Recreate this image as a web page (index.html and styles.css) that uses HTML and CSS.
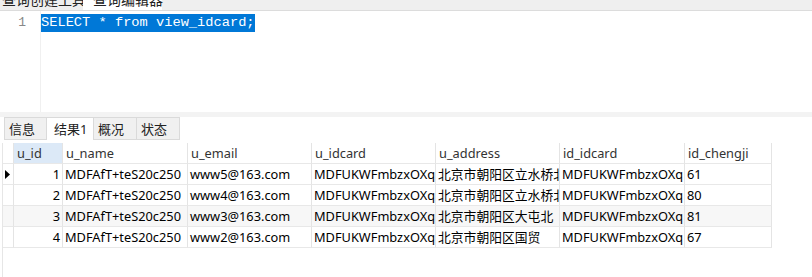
FILE: index.html
```html
<!DOCTYPE html>
<html lang="zh">

<head>
    <meta charset="utf-8">
    <title>查询编辑器</title>
    <link rel="stylesheet" href="styles.css">
</head>

<body>
    <nav class="top-tabs">
        <span class="top-tab">查询创建工具</span>
        <span class="top-tab aktiv">查询编辑器</span>
    </nav>

    <section class="editor">
        <div class="gutter">1</div>
        <pre class="code"><span class="markeret">SELECT * from view_idcard;</span></pre>
    </section>

    <div class="splitter"></div>

    <nav class="result-tabs">
        <span class="result-tab">信息</span>
        <span class="result-tab aktiv">结果1</span>
        <span class="result-tab">概况</span>
        <span class="result-tab">状态</span>
    </nav>

    <section class="grid">
        <div class="row header">
            <span class="cell"></span>
            <span class="cell valgt">u_id</span>
            <span class="cell">u_name</span>
            <span class="cell">u_email</span>
            <span class="cell">u_idcard</span>
            <span class="cell">u_address</span>
            <span class="cell">id_idcard</span>
            <span class="cell">id_chengji</span>
        </div>
        <div class="row">
            <span class="cell indikator"><svg width="5" height="9" viewBox="0 0 5 9"><polygon points="0,0 5,4.5 0,9" fill="#000"/></svg></span>
            <span class="cell tal">1</span>
            <span class="cell">MDFAfT+teS20c250</span>
            <span class="cell">www5@163.com</span>
            <span class="cell">MDFUKWFmbzxOXq</span>
            <span class="cell">北京市朝阳区立水桥北</span>
            <span class="cell">MDFUKWFmbzxOXq</span>
            <span class="cell">61</span>
        </div>
        <div class="row">
            <span class="cell indikator"></span>
            <span class="cell tal">2</span>
            <span class="cell">MDFAfT+teS20c250</span>
            <span class="cell">www4@163.com</span>
            <span class="cell">MDFUKWFmbzxOXq</span>
            <span class="cell">北京市朝阳区立水桥北</span>
            <span class="cell">MDFUKWFmbzxOXq</span>
            <span class="cell">80</span>
        </div>
        <div class="row">
            <span class="cell indikator"></span>
            <span class="cell tal">3</span>
            <span class="cell">MDFAfT+teS20c250</span>
            <span class="cell">www3@163.com</span>
            <span class="cell">MDFUKWFmbzxOXq</span>
            <span class="cell">北京市朝阳区大屯北</span>
            <span class="cell">MDFUKWFmbzxOXq</span>
            <span class="cell">81</span>
        </div>
        <div class="row">
            <span class="cell indikator"></span>
            <span class="cell tal">4</span>
            <span class="cell">MDFAfT+teS20c250</span>
            <span class="cell">www2@163.com</span>
            <span class="cell">MDFUKWFmbzxOXq</span>
            <span class="cell">北京市朝阳区国贸</span>
            <span class="cell">MDFUKWFmbzxOXq</span>
            <span class="cell">67</span>
        </div>
    </section>
</body>

</html>
```

FILE: styles.css
```css
body {
    margin: 0;
    height: 277px;
    display: flex;
    flex-direction: column;
    background-color: #fff;
    font-family: "Noto Sans", "Noto Sans CJK SC", sans-serif;
    font-size: 13px;
    color: #000;
    overflow: hidden;
}

/* faner helt oppe - skåret af i toppen */
.top-tabs {
    display: flex;
    height: 10px;
    overflow: hidden;
    background-color: #efefef;
    border-bottom: 1px solid #dcdcdc;
}

.top-tab {
    margin-top: -8px;
    line-height: 16px;
    padding: 0 2px;
    width: 79px;
    font-size: 14px;
    color: #222;
    white-space: nowrap;
}

.top-tab.aktiv {
    background-color: #fff;
    padding-left: 10px;
    width: 67px;
}

/* sql editor */
.editor {
    display: flex;
    height: 101px;
}

.gutter {
    width: 26px;
    padding-right: 14px;
    padding-top: 3px;
    line-height: 18px;
    text-align: right;
    color: #888;
    font-family: "Liberation Mono", monospace;
    font-size: 13px;
    border-right: 1px solid #f0f0f0;
}

.code {
    margin: 0;
    padding-top: 3px;
    font-family: "Liberation Mono", monospace;
    font-size: 13.7px;
    line-height: 18px;
}

.markeret {
    display: inline-block;
    background-color: #0078d7;
    color: #fff;
}

.splitter {
    height: 5px;
    background-color: #f3f3f3;
}

/* resultat faner */
.result-tabs {
    display: flex;
    height: 23px;
    padding-left: 4px;
}

.result-tab {
    box-sizing: border-box;
    width: 43px;
    height: 23px;
    line-height: 22px;
    padding-left: 4px;
    background-color: #f0f0f0;
    border: 1px solid #dadada;
    border-left: none;
    color: #222;
}

.result-tab:first-child {
    border-left: 1px solid #dadada;
}

.result-tab.aktiv {
    width: 47px;
    padding-left: 7px;
    background-color: #fff;
    border-bottom: none;
}

/* data grid */
.grid {
    flex: 1;
    margin-top: 3px;
    margin-left: 2px;
    border-left: 1px solid #e6e6e6;
    font-size: 12.8px;
}

.row {
    display: grid;
    grid-template-columns: 11px 49px 125px 124px 124px 124px 125px 87px;
    width: max-content;
    height: 21px;
}

.row:nth-child(4) {
    background-color: #f7f7f7;
}

.cell {
    box-sizing: border-box;
    padding-left: 2px;
    line-height: 20px;
    white-space: nowrap;
    overflow: hidden;
    border-right: 1px solid #e4e4e4;
    border-bottom: 1px solid #e8e8e8;
}

.header .cell {
    padding-left: 3px;
    color: #333;
    background-color: #fff;
}

.header .valgt {
    background-color: #dce9f7;
}

.tal {
    text-align: right;
    padding-right: 2px;
}

.indikator {
    padding-left: 2px;
    display: flex;
    align-items: center;
}
```
